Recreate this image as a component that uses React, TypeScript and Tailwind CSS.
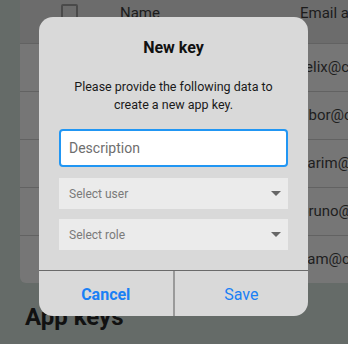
import React from "react";

const rows = [
  { name: "Felix Moreau", email: "felix@cloudkey.io" },
  { name: "Tibor Nagy", email: "tibor@cloudkey.io" },
  { name: "Karim Haddad", email: "karim@cloudkey.io" },
  { name: "Bruno Costa", email: "bruno@cloudkey.io" },
  { name: "Liam Walsh", email: "liam@cloudkey.io" },
];

function Caret() {
  return (
    <svg width="10" height="5" viewBox="0 0 10 5" className="shrink-0">
      <path d="M0 0h10L5 5z" fill="#666666" />
    </svg>
  );
}

function SelectBox({ label }: { label: string }) {
  return (
    <div className="flex h-[31px] items-center justify-between bg-[#ebebeb] pl-[10px] pr-[7px]">
      <span className="text-[12px] text-[#7a7a7a]">{label}</span>
      <Caret />
    </div>
  );
}

export default function App() {
  return (
    <div
      className="relative h-[344px] w-[348px] overflow-hidden bg-[#656b68]"
      style={{ fontFamily: "Roboto, 'Liberation Sans', sans-serif" }}
    >
      {/* page behind the dimmed backdrop */}
      <div className="ml-[20px] w-[420px] overflow-hidden rounded-b-[6px] bg-[#767676]">
        <div className="flex h-[43px] items-start whitespace-nowrap bg-[#6c6c6c] pt-[4px] text-[15px] leading-[17px] text-[#1c1c1c]">
          <div className="ml-[41px] h-[17px] w-[17px] shrink-0 rounded-[2px] border-2 border-[#4a4a4a]" />
          <span className="ml-[42px] w-[180px] shrink-0 pt-[1px]">Name</span>
          <span className="shrink-0 pt-[1px]">Email address</span>
        </div>
        {rows.map((r) => (
          <div
            key={r.email}
            className="flex h-[48px] items-center whitespace-nowrap border-t border-[#626262] text-[15px] text-[#1e1e1e]"
          >
            <span className="ml-[100px] w-[180px] shrink-0">{r.name}</span>
            <span className="shrink-0">{r.email}</span>
          </div>
        ))}
      </div>
      <h2 className="ml-[25px] mt-[22px] text-[24px] font-bold leading-none text-[#111111]">
        App keys
      </h2>

      {/* dialog */}
      <div className="absolute left-[39px] top-[17px] flex w-[269px] flex-col overflow-hidden rounded-[14px] bg-[#d9d9d9]">
        <div className="px-[20px] pt-[21px]">
          <div className="text-center text-[16px] font-bold leading-[20px] text-[#111111]">
            New key
          </div>
          <p className="mt-[20px] text-center text-[12.5px] leading-[18px] text-[#1a1a1a]">
            Please provide the following data to
            <br />
            create a new app key.
          </p>
          <div className="mt-[15px] flex h-[38px] items-center rounded-[4px] border-2 border-[#2196f3] bg-white px-[8px]">
            <span className="text-[14px] text-[#6e6e6e]">Description</span>
          </div>
          <div className="mt-[11px]">
            <SelectBox label="Select user" />
          </div>
          <div className="mt-[10px]">
            <SelectBox label="Select role" />
          </div>
        </div>
        <div className="mt-[20px] flex h-[46px] border-t border-[#6a6a6a]">
          <button className="flex flex-1 items-center justify-center pt-[2px] text-[16px] font-bold text-[#1a80f5]">
            Cancel
          </button>
          <div className="w-[2px] bg-[#9a9a9a]" />
          <button className="flex flex-1 items-center justify-center pt-[2px] text-[16px] text-[#1a80f5]">
            Save
          </button>
        </div>
      </div>
    </div>
  );
}
